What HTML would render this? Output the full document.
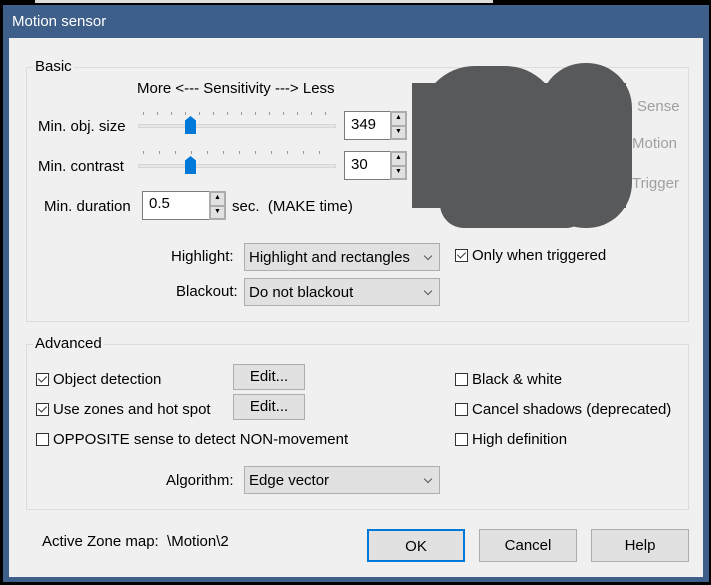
<!DOCTYPE html>
<html><head><meta charset="utf-8"><style>
*{box-sizing:border-box;margin:0;padding:0}
body{width:711px;height:585px;background:#000;position:relative;overflow:hidden;font-family:"Liberation Sans",sans-serif;font-size:15px;color:#000}
.a{position:absolute}
.t{position:absolute;white-space:nowrap;line-height:16px}
.grp{position:absolute;border:1px solid #dcdcdc}
.lg{position:absolute;background:#f0f0f0;padding:0 2px;line-height:16px;font-size:15px}
.edit{position:absolute;background:#fff;border:1px solid #7a7a7a;padding-left:6px;line-height:26px}
.spin{position:absolute;border:1px solid #adadad;background:#f0f0f0}
.spin div{height:50%;border:1px solid #adadad;background:#e1e1e1;font-size:7px;text-align:center;line-height:10px}
.cb{position:absolute;border:1px solid #adadad;background:#e1e1e1;padding-left:4px;line-height:27px}
.cb:after{content:"";position:absolute;right:8px;top:9px;width:5px;height:5px;border-right:1px solid #555;border-bottom:1px solid #555;transform:rotate(45deg)}
.btn{position:absolute;border:1px solid #adadad;background:#e1e1e1;text-align:center}
.chk{position:absolute;width:13px;height:13px;border:1px solid #333;background:#fff}
.chk.on:after{content:"";position:absolute;left:3px;top:0px;width:4px;height:7px;border-right:1.5px solid #333;border-bottom:1.5px solid #333;transform:rotate(45deg)}
.track{position:absolute;height:4px;background:#e7e7e7;border:1px solid #d6d6d6}
.thumb{position:absolute;width:11px;height:18px;background:#0078d7;clip-path:polygon(50% 0,100% 25%,100% 100%,0 100%,0 25%)}
.ticks{position:absolute;height:3px;background-image:linear-gradient(90deg,#999 1px,transparent 1px);background-size:14px 3px}
.blob{position:absolute;background:#58595b}
</style></head><body>
<div class="a" style="left:35px;top:0;width:458px;height:3px;background:#ddd"></div>
<div class="a" style="left:3px;top:5px;width:706px;height:577px;background:#3d5f8a"></div>
<div class="t" style="left:12px;top:14px;color:#fff;font-size:15px">Motion sensor</div>
<div class="a" style="left:9px;top:38px;width:694px;height:539px;background:#f0f0f0"></div>

<div class="grp" style="left:26px;top:67px;width:663px;height:255px"></div>
<div class="lg" style="left:33px;top:59px">Basic</div>
<div class="t" style="left:137px;top:81px">More &lt;--- Sensitivity ---&gt; Less</div>
<div class="t" style="left:38px;top:119px">Min. obj. size</div>
<div class="t" style="left:38px;top:159px">Min. contrast</div>
<div class="t" style="left:44px;top:199px">Min. duration</div>

<div class="ticks" style="left:143px;top:112px;width:190px"></div>
<div class="track" style="left:138px;top:124px;width:198px"></div>
<div class="thumb" style="left:185px;top:116px"></div>
<div class="ticks" style="left:143px;top:151px;width:190px;background-size:16px 3px"></div>
<div class="track" style="left:138px;top:164px;width:198px"></div>
<div class="thumb" style="left:185px;top:156px"></div>

<div class="edit" style="left:344px;top:111px;width:47px;height:29px">349</div>
<div class="spin" style="left:390px;top:111px;width:17px;height:29px"><div>▲</div><div>▼</div></div>
<div class="edit" style="left:344px;top:151px;width:47px;height:29px">30</div>
<div class="spin" style="left:390px;top:151px;width:17px;height:29px"><div>▲</div><div>▼</div></div>
<div class="edit" style="left:142px;top:191px;width:68px;height:29px;line-height:24px">0.5</div>
<div class="spin" style="left:209px;top:191px;width:17px;height:29px"><div>▲</div><div>▼</div></div>
<div class="t" style="left:232px;top:199px">sec.&nbsp; (MAKE time)</div>

<div class="blob" style="left:412px;top:83px;width:214px;height:125px"></div>
<div class="blob" style="left:420px;top:66px;width:140px;height:150px;border-radius:55px"></div>
<div class="blob" style="left:540px;top:63px;width:92px;height:165px;border-radius:45px"></div>
<div class="blob" style="left:440px;top:180px;width:150px;height:48px;border-radius:24px"></div>
<div class="t" style="left:637px;top:99px;color:#a0a0a0">Sense</div>
<div class="t" style="left:632px;top:136px;color:#a0a0a0">Motion</div>
<div class="t" style="left:632px;top:176px;color:#a0a0a0">Trigger</div>

<div class="t" style="left:171px;top:249px">Highlight:</div>
<div class="cb" style="left:244px;top:243px;width:196px;height:28px">Highlight and rectangles</div>
<div class="t" style="left:176px;top:284px">Blackout:</div>
<div class="cb" style="left:244px;top:278px;width:196px;height:28px">Do not blackout</div>
<div class="chk on" style="left:455px;top:249px"></div>
<div class="t" style="left:472px;top:248px">Only when triggered</div>

<div class="grp" style="left:26px;top:344px;width:663px;height:166px"></div>
<div class="lg" style="left:33px;top:336px">Advanced</div>
<div class="chk on" style="left:36px;top:373px"></div>
<div class="t" style="left:53px;top:372px">Object detection</div>
<div class="chk on" style="left:36px;top:403px"></div>
<div class="t" style="left:53px;top:402px">Use zones and hot spot</div>
<div class="chk" style="left:36px;top:433px"></div>
<div class="t" style="left:53px;top:432px">OPPOSITE sense to detect NON-movement</div>
<div class="btn" style="left:233px;top:364px;width:72px;height:26px;line-height:24px">Edit...</div>
<div class="btn" style="left:233px;top:394px;width:72px;height:26px;line-height:24px">Edit...</div>
<div class="chk" style="left:455px;top:373px"></div>
<div class="t" style="left:472px;top:372px">Black &amp; white</div>
<div class="chk" style="left:455px;top:403px"></div>
<div class="t" style="left:472px;top:402px">Cancel shadows (deprecated)</div>
<div class="chk" style="left:455px;top:433px"></div>
<div class="t" style="left:472px;top:432px">High definition</div>
<div class="t" style="left:166px;top:473px">Algorithm:</div>
<div class="cb" style="left:244px;top:466px;width:196px;height:28px">Edge vector</div>

<div class="t" style="left:42px;top:534px">Active Zone map:&nbsp; \Motion\2</div>
<div class="btn" style="left:367px;top:529px;width:98px;height:33px;line-height:31px;border:2px solid #0078d7">OK</div>
<div class="btn" style="left:479px;top:529px;width:98px;height:33px;line-height:31px">Cancel</div>
<div class="btn" style="left:591px;top:529px;width:98px;height:33px;line-height:31px">Help</div>
</body></html>
